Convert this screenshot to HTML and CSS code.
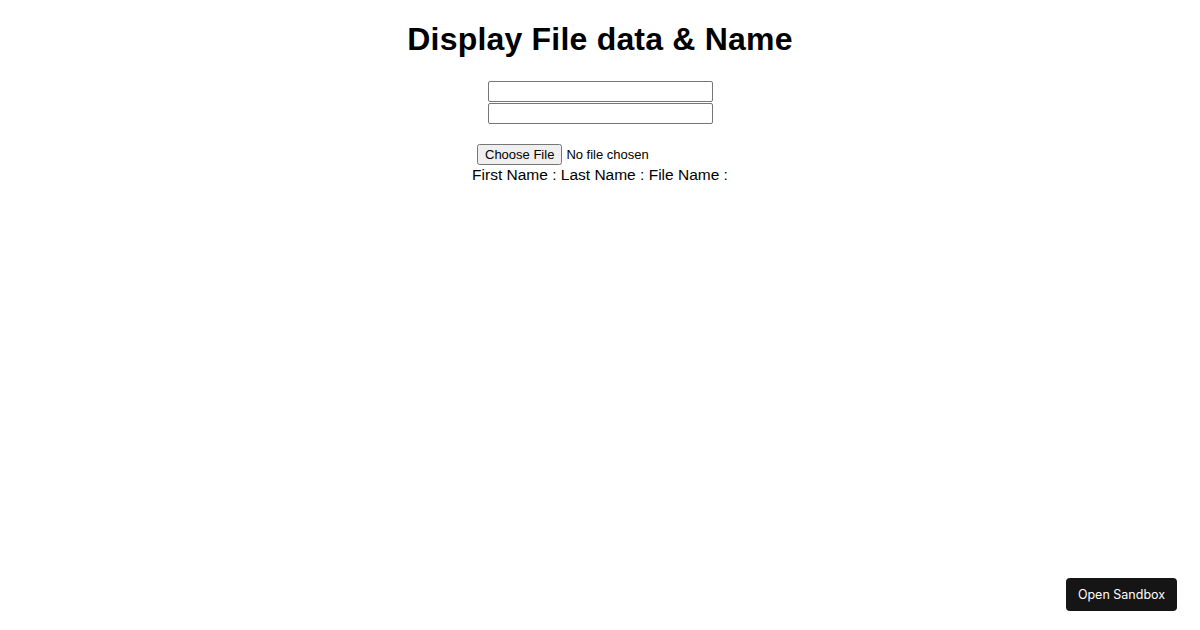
FILE: index.html
```html
<!DOCTYPE html>
<html>
<head>
<meta charset="utf-8">
<link rel="stylesheet" href="styles.css">
</head>
<body>
<div class="app">
  <h1 class="title">Display File data &amp; Name</h1>
  <form class="form">
    <input class="text-input" type="text">
    <input class="text-input" type="text">
    <div class="file-row"><input class="file-input" type="file"></div>
  </form>
  <div class="summary">First Name : Last Name : File Name :</div>
</div>
<a class="open-sandbox">Open Sandbox</a>
</body>
</html>
```
FILE: styles.css
```css
body {
  margin: 8px;
  background: #fff;
}
.app {
  font-family: "Liberation Sans", Arial, sans-serif;
  text-align: center;
  color: #000;
}
.title {
  font-size: 32px;
  letter-spacing: 0.2px;
  font-weight: bold;
  margin: 13px 0 23px;
}
.form {
  display: flex;
  flex-direction: column;
  align-items: center;
}
.text-input {
  width: 225px;
  height: 21px;
  box-sizing: border-box;
  margin: 0 0 1px;
  border: 1px solid #767676;
  border-radius: 2px;
  padding: 1px 2px;
  font-family: "Liberation Sans", Arial, sans-serif;
}
.file-row {
  margin-top: 19px;
}
.file-input {
  font-family: "Liberation Sans", Arial, sans-serif;
  font-size: 13px;
}
.summary {
  font-size: 15.5px;
  line-height: 18px;
  margin-top: 1px;
}
.open-sandbox {
  position: fixed;
  right: 23px;
  bottom: 19px;
  width: 111px;
  height: 33px;
  box-sizing: border-box;
  display: flex;
  align-items: center;
  justify-content: center;
  background: #151515;
  color: #fff;
  border-radius: 4px;
  font-family: Inter, "Liberation Sans", sans-serif;
  font-size: 12.5px;
}
```
